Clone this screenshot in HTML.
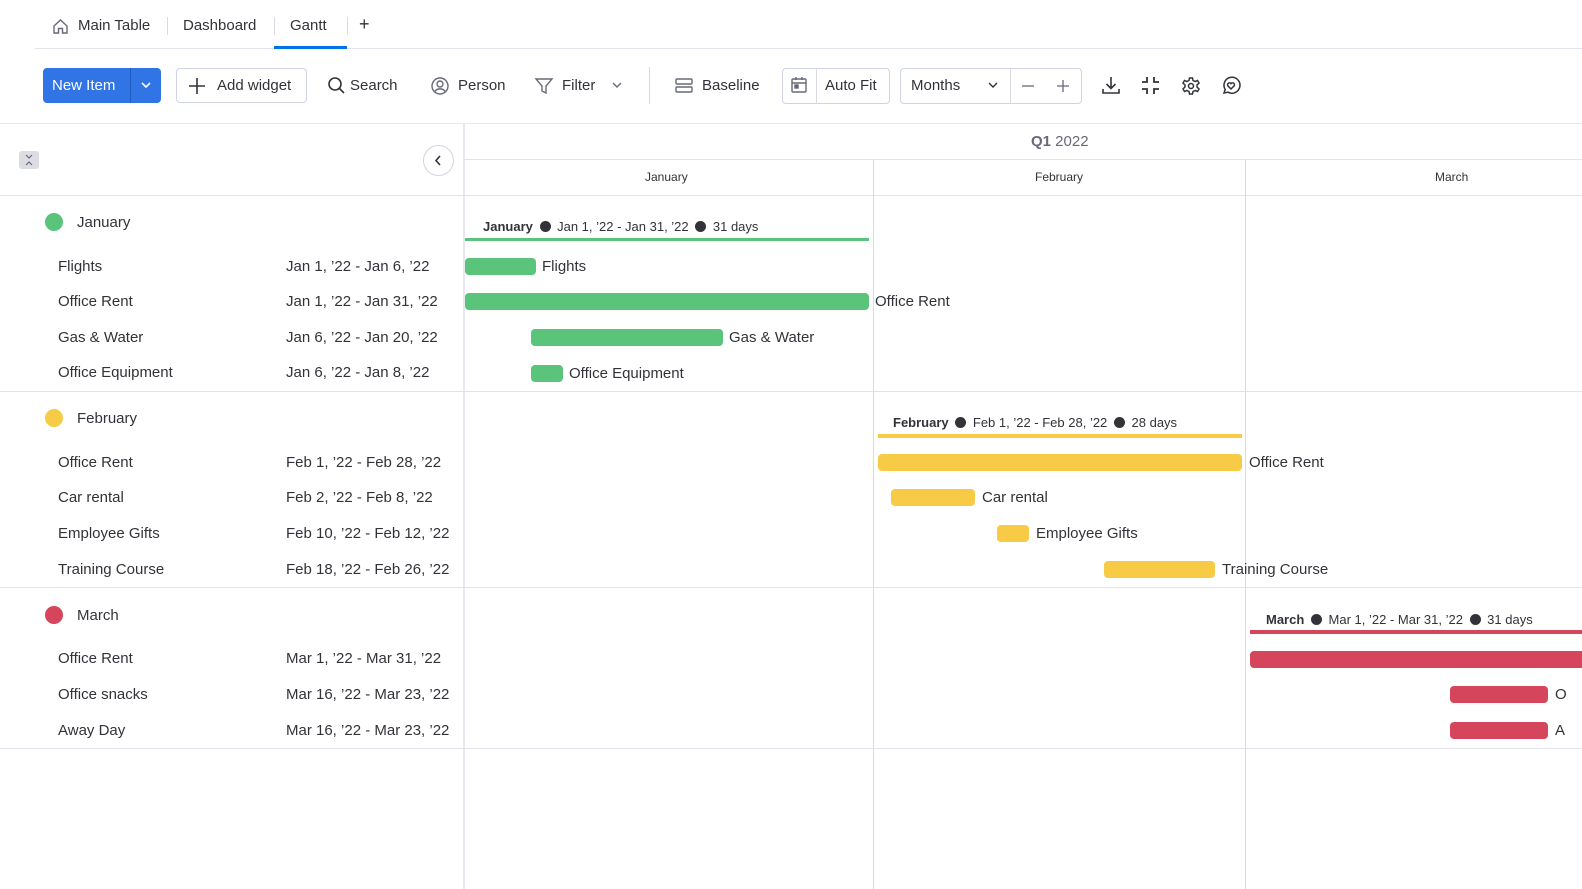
<!DOCTYPE html>
<html><head><meta charset="utf-8"><style>
*{box-sizing:border-box;margin:0;padding:0}
body{width:1582px;height:889px;background:#fff;font-family:"Liberation Sans",sans-serif;color:#323338;position:relative;overflow:hidden}
.a{position:absolute;white-space:nowrap}
.t{font-size:15px;line-height:18px}
.hl{position:absolute;height:1px;background:#e1e2ea}
.vl{position:absolute;width:1px;background:#d9dae3}
.bar{position:absolute;height:17px;border-radius:4px}
.g{background:#5ac47a}.y{background:#f7cb45}.r{background:#d5465c}
.dot{display:inline-block;width:11px;height:11px;border-radius:50%;background:#323338;vertical-align:-1px;margin:0 3px}
.sum{font-size:13px;line-height:16px}
.btn{position:absolute;border:1px solid #d0d4e4;border-radius:4px;height:36px}
svg{position:absolute}
</style></head><body>
<!-- tabs -->
<svg style="left:52px;top:18px" width="17" height="17" viewBox="0 0 17 17" fill="none" stroke="#676879" stroke-width="1.4"><path d="M2 8 L8.5 2 L15 8 V15 H10.5 V10.5 H6.5 V15 H2 Z"/></svg>
<div class="a t" style="left:78px;top:17px;color:#323338">Main Table</div>
<div class="vl" style="left:167px;top:17px;height:18px"></div>
<div class="a t" style="left:183px;top:17px">Dashboard</div>
<div class="vl" style="left:274px;top:17px;height:18px"></div>
<div class="a t" style="left:290px;top:17px">Gantt</div>
<div class="vl" style="left:347px;top:17px;height:18px"></div>
<div class="a" style="left:359px;top:14px;font-size:18px">+</div>
<div class="hl" style="left:35px;top:48px;width:1547px"></div>
<div class="a" style="left:274px;top:46px;width:73px;height:3px;background:#0073ea"></div>
<!-- toolbar -->
<div class="a" style="left:43px;top:68px;width:118px;height:35px;background:#3074e6;border-radius:4px"></div>
<div class="a t" style="left:52px;top:77px;color:#fff">New Item</div>
<div class="a" style="left:130px;top:68px;width:1px;height:35px;background:#1f5bc0"></div>
<svg style="left:140px;top:80px" width="12" height="10" viewBox="0 0 12 10" fill="none" stroke="#fff" stroke-width="1.6"><path d="M2 3 L6 7 L10 3"/></svg>
<div class="btn" style="left:176px;top:68px;width:131px;height:35px"></div>
<svg style="left:187px;top:76px" width="20" height="20" viewBox="0 0 20 20" stroke="#323338" stroke-width="1.6"><path d="M10 2V18M2 10H18"/></svg>
<div class="a t" style="left:217px;top:77px">Add widget</div>
<svg style="left:327px;top:76px" width="20" height="20" viewBox="0 0 20 20" fill="none" stroke="#323338" stroke-width="1.6"><circle cx="8" cy="8" r="6"/><path d="M12.5 12.5 L17 17"/></svg>
<div class="a t" style="left:350px;top:77px">Search</div>
<svg style="left:430px;top:76px" width="20" height="20" viewBox="0 0 20 20" fill="none" stroke="#676879" stroke-width="1.4"><circle cx="10" cy="10" r="8"/><circle cx="10" cy="8" r="3"/><path d="M5 15.5 C7 12 13 12 15 15.5"/></svg>
<div class="a t" style="left:458px;top:77px">Person</div>
<svg style="left:534px;top:76px" width="20" height="20" viewBox="0 0 20 20" fill="none" stroke="#676879" stroke-width="1.4"><path d="M2 3H18L12 10V17L8 15V10Z"/></svg>
<div class="a t" style="left:562px;top:77px">Filter</div>
<svg style="left:611px;top:80px" width="12" height="10" viewBox="0 0 12 10" fill="none" stroke="#676879" stroke-width="1.4"><path d="M2 3L6 7L10 3"/></svg>
<div class="vl" style="left:649px;top:67px;height:37px"></div>
<svg style="left:675px;top:77px" width="19" height="17" viewBox="0 0 19 17" fill="none" stroke="#676879" stroke-width="1.4"><rect x="1" y="2" width="16" height="5" rx="1"/><rect x="1" y="10" width="16" height="5" rx="1"/></svg>
<div class="a t" style="left:702px;top:77px">Baseline</div>
<div class="btn" style="left:782px;top:68px;width:108px;height:36px"></div>
<div class="vl" style="left:816px;top:68px;height:36px"></div>
<svg style="left:790px;top:76px" width="18" height="18" viewBox="0 0 18 18" fill="none" stroke="#676879" stroke-width="1.4"><rect x="2" y="3" width="14" height="13" rx="1"/><path d="M2 7H16M6 1V4M12 1V4"/><rect x="5" y="9" width="3" height="3" fill="#676879"/></svg>
<div class="a t" style="left:825px;top:77px">Auto Fit</div>
<div class="btn" style="left:900px;top:68px;width:182px;height:36px"></div>
<div class="vl" style="left:1010px;top:68px;height:36px"></div>
<div class="a t" style="left:911px;top:77px">Months</div>
<svg style="left:987px;top:80px" width="12" height="10" viewBox="0 0 12 10" fill="none" stroke="#323338" stroke-width="1.4"><path d="M2 3L6 7L10 3"/></svg>
<svg style="left:1020px;top:78px" width="16" height="16" viewBox="0 0 16 16" stroke="#676879" stroke-width="1.3"><path d="M2 8H14"/></svg>
<svg style="left:1055px;top:78px" width="16" height="16" viewBox="0 0 16 16" stroke="#676879" stroke-width="1.3"><path d="M2 8H14M8 2V14"/></svg>
<svg style="left:1101px;top:75px" width="20" height="20" viewBox="0 0 20 20" fill="none" stroke="#323338" stroke-width="1.6"><path d="M10 2V13M5.5 9L10 13.5L14.5 9M2 14V18H18V14"/></svg>
<svg style="left:1140px;top:75px" width="21" height="21" viewBox="0 0 21 21" fill="none" stroke="#323338" stroke-width="1.8"><path d="M7 2V7H2M14 2V7H19M7 19V14H2M14 19V14H19"/></svg>
<svg style="left:1181px;top:76px" width="20" height="20" viewBox="0 0 20 20" fill="none" stroke="#323338" stroke-width="1.5"><path d="M8.5 2H11.5L12 4.5L14.3 5.6L16.5 4.5L18 7L16 9V11L18 13L16.5 15.5L14.3 14.4L12 15.5L11.5 18H8.5L8 15.5L5.7 14.4L3.5 15.5L2 13L4 11V9L2 7L3.5 4.5L5.7 5.6L8 4.5Z"/><circle cx="10" cy="10" r="2.5"/></svg>
<svg style="left:1221px;top:76px" width="20" height="20" viewBox="0 0 20 20" fill="none" stroke="#323338" stroke-width="1.5"><path d="M3 17L4.2 13.5A8 8 0 1 1 7 16.2Z"/><path d="M10 13L7 10A1.8 1.8 0 0 1 10 7.6A1.8 1.8 0 0 1 13 10Z"/></svg>
<div class="hl" style="left:0;top:123px;width:1582px;background:#e6e9ef"></div>
<!-- left panel -->
<div class="a" style="left:19px;top:151px;width:20px;height:18px;background:#dcdde3;border-radius:3px"></div>
<svg style="left:23px;top:153px" width="12" height="14" viewBox="0 0 12 14" fill="none" stroke="#676879" stroke-width="1.2"><path d="M3 2L6 5L9 2M3 12L6 9L9 12"/></svg>
<div class="a" style="left:423px;top:145px;width:31px;height:31px;border:1px solid #d0d4e4;border-radius:50%;background:#fff"></div>
<svg style="left:432px;top:154px" width="12" height="13" viewBox="0 0 12 13" fill="none" stroke="#323338" stroke-width="1.6"><path d="M8 2L4 6.5L8 11"/></svg>
<div class="vl" style="left:463px;top:124px;height:765px;background:#e6e9ef;width:2px"></div>
<div class="hl" style="left:0;top:195px;width:1582px"></div>
<div class="hl" style="left:464px;top:159px;width:1118px"></div>
<div class="a" style="left:1031px;top:133px;font-size:15px;color:#676879"><b>Q1</b> 2022</div>
<div class="a" style="left:645px;top:170px;font-size:12px;color:#323338">January</div>
<div class="a" style="left:1035px;top:170px;font-size:12px">February</div>
<div class="a" style="left:1435px;top:170px;font-size:12px">March</div>
<div class="vl" style="left:873px;top:160px;height:729px"></div>
<div class="vl" style="left:1245px;top:160px;height:729px"></div>
<div class="hl" style="left:0;top:391px;width:1582px"></div>
<div class="hl" style="left:0;top:587px;width:1582px"></div>
<div class="hl" style="left:0;top:748px;width:1582px"></div>

<!-- January -->
<div class="a" style="left:45px;top:213px;width:18px;height:18px;border-radius:50%;background:#5ac47a"></div>
<div class="a t" style="left:77px;top:214px">January</div>
<div class="a t" style="left:58px;top:258px">Flights</div><div class="a t" style="left:286px;top:258px">Jan 1, ’22 - Jan 6, ’22</div>
<div class="a t" style="left:58px;top:293px">Office Rent</div><div class="a t" style="left:286px;top:293px">Jan 1, ’22 - Jan 31, ’22</div>
<div class="a t" style="left:58px;top:329px">Gas &amp; Water</div><div class="a t" style="left:286px;top:329px">Jan 6, ’22 - Jan 20, ’22</div>
<div class="a t" style="left:58px;top:364px">Office Equipment</div><div class="a t" style="left:286px;top:364px">Jan 6, ’22 - Jan 8, ’22</div>
<div class="a sum" style="left:483px;top:219px"><b>January</b> <span class="dot"></span> Jan 1, ’22 - Jan 31, ’22 <span class="dot"></span> 31 days</div>
<div class="a g" style="left:465px;top:238px;width:404px;height:3px"></div>
<div class="bar g" style="left:465px;top:258px;width:71px"></div><div class="a t" style="left:542px;top:258px">Flights</div>
<div class="bar g" style="left:465px;top:293px;width:404px"></div><div class="a t" style="left:875px;top:293px">Office Rent</div>
<div class="bar g" style="left:531px;top:329px;width:192px"></div><div class="a t" style="left:729px;top:329px">Gas &amp; Water</div>
<div class="bar g" style="left:531px;top:365px;width:32px"></div><div class="a t" style="left:569px;top:365px">Office Equipment</div>

<!-- February -->
<div class="a" style="left:45px;top:409px;width:18px;height:18px;border-radius:50%;background:#f7cb45"></div>
<div class="a t" style="left:77px;top:410px">February</div>
<div class="a t" style="left:58px;top:454px">Office Rent</div><div class="a t" style="left:286px;top:454px">Feb 1, ’22 - Feb 28, ’22</div>
<div class="a t" style="left:58px;top:489px">Car rental</div><div class="a t" style="left:286px;top:489px">Feb 2, ’22 - Feb 8, ’22</div>
<div class="a t" style="left:58px;top:525px">Employee Gifts</div><div class="a t" style="left:286px;top:525px">Feb 10, ’22 - Feb 12, ’22</div>
<div class="a t" style="left:58px;top:561px">Training Course</div><div class="a t" style="left:286px;top:561px">Feb 18, ’22 - Feb 26, ’22</div>
<div class="a sum" style="left:893px;top:415px"><b>February</b> <span class="dot"></span> Feb 1, ’22 - Feb 28, ’22 <span class="dot"></span> 28 days</div>
<div class="a y" style="left:878px;top:434px;width:364px;height:4px"></div>
<div class="bar y" style="left:878px;top:454px;width:364px"></div><div class="a t" style="left:1249px;top:454px">Office Rent</div>
<div class="bar y" style="left:891px;top:489px;width:84px"></div><div class="a t" style="left:982px;top:489px">Car rental</div>
<div class="bar y" style="left:997px;top:525px;width:32px"></div><div class="a t" style="left:1036px;top:525px">Employee Gifts</div>
<div class="bar y" style="left:1104px;top:561px;width:111px"></div><div class="a t" style="left:1222px;top:561px">Training Course</div>

<!-- March -->
<div class="a" style="left:45px;top:606px;width:18px;height:18px;border-radius:50%;background:#d5465c"></div>
<div class="a t" style="left:77px;top:607px">March</div>
<div class="a t" style="left:58px;top:650px">Office Rent</div><div class="a t" style="left:286px;top:650px">Mar 1, ’22 - Mar 31, ’22</div>
<div class="a t" style="left:58px;top:686px">Office snacks</div><div class="a t" style="left:286px;top:686px">Mar 16, ’22 - Mar 23, ’22</div>
<div class="a t" style="left:58px;top:722px">Away Day</div><div class="a t" style="left:286px;top:722px">Mar 16, ’22 - Mar 23, ’22</div>
<div class="a sum" style="left:1266px;top:612px"><b>March</b> <span class="dot"></span> Mar 1, ’22 - Mar 31, ’22 <span class="dot"></span> 31 days</div>
<div class="a r" style="left:1250px;top:630px;width:340px;height:4px"></div>
<div class="bar r" style="left:1250px;top:651px;width:340px"></div>
<div class="bar r" style="left:1450px;top:686px;width:98px"></div><div class="a t" style="left:1555px;top:686px">O</div>
<div class="bar r" style="left:1450px;top:722px;width:98px"></div><div class="a t" style="left:1555px;top:722px">A</div>
</body></html>
